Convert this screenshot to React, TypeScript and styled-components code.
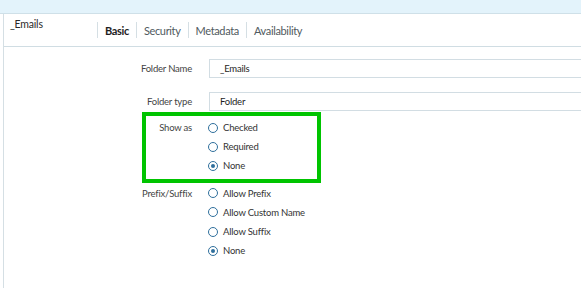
import styled, { createGlobalStyle } from "styled-components"

const GlobalStyle = createGlobalStyle`
  html, body {
    margin: 0;
    padding: 0;
    background: #ffffff;
  }
  body {
    font-family: Lato, "Open Sans", sans-serif;
    font-size: 9.5px;
    letter-spacing: -0.2px;
    color: #333333;
  }
`

const Page = styled.div`
  width: 581px;
  height: 288px;
  overflow: hidden;
  display: flex;
  flex-direction: column;
`

const TopStrip = styled.div`
  height: 13px;
  flex-shrink: 0;
  background-color: #e3f3fb;
  border-bottom: 1px solid #cfe0e8;
`

const Panel = styled.div`
  flex: 1;
  margin-left: 3px;
  border-left: 1px solid #d5dfe4;
  display: flex;
  flex-direction: column;
`

const Header = styled.div`
  height: 32px;
  flex-shrink: 0;
  display: flex;
  align-items: flex-start;
  border-bottom: 1px solid #d0dde3;
`

const ItemName = styled.div`
  width: 87px;
  padding-left: 6px;
  padding-top: 4px;
  font-size: 10.5px;
  color: #2a2a2a;
`

const Tabs = styled.div`
  display: flex;
  align-items: center;
  margin-top: 8px;
`

const Tab = styled.div<{ $active?: boolean }>`
  padding: 0 7px;
  height: 16px;
  display: flex;
  align-items: center;
  border-left: 1px solid #d5dfe4;
  font-size: 11px;
  letter-spacing: -0.35px;
  font-weight: ${props => props.$active ? 700 : 400};
  color: ${props => props.$active ? "#1e1e1e" : "#505a60"};
`

const Form = styled.div`
  display: flex;
  flex-direction: column;
  padding-top: 12px;
`

const FieldRow = styled.div<{ $top?: number }>`
  position: relative;
  display: grid;
  grid-template-columns: 188px 1fr;
  column-gap: 17px;
  margin-top: ${props => props.$top ?? 0}px;
`

const Label = styled.div<{ $height: number }>`
  height: ${props => props.$height}px;
  display: flex;
  align-items: center;
  justify-content: flex-end;
  color: #444444;
`

const TextBox = styled.div`
  height: 17px;
  border: 1px solid #d2dde3;
  border-right: none;
  padding-left: 10px;
  display: flex;
  align-items: center;
  color: #1e1e1e;
`

const RadioList = styled.div<{ $step: number }>`
  display: flex;
  flex-direction: column;

  & > * {
    height: ${props => props.$step}px;
  }
`

const RadioItem = styled.div`
  display: flex;
  align-items: center;
  gap: 5px;
  margin-left: -1px;
  color: #333333;
`

const RadioCircle = styled.span<{ $checked?: boolean }>`
  width: 8px;
  height: 8px;
  border: 1px solid #2f6f9c;
  border-radius: 50%;
  display: flex;
  align-items: center;
  justify-content: center;
  background: #ffffff;

  &::after {
    content: "";
    width: 4px;
    height: 4px;
    border-radius: 50%;
    background: #2f6f9c;
    display: ${props => props.$checked ? "block" : "none"};
  }
`

const Highlight = styled.div`
  position: absolute;
  left: 138px;
  top: -6px;
  width: 171px;
  height: 63px;
  border: 4px solid #00c400;
  pointer-events: none;
`

type RadioGroupProps = { options: string[]; selected: string; step?: number }

const RadioGroup = ({ options, selected, step = 19 }: RadioGroupProps) => (
  <RadioList $step={step}>
    {options.map(option => (
      <RadioItem key={option}>
        <RadioCircle $checked={option === selected} />
        {option}
      </RadioItem>
    ))}
  </RadioList>
)

export default function App() {
  return (
    <Page>
      <GlobalStyle />
      <TopStrip />
      <Panel>
        <Header>
          <ItemName>_Emails</ItemName>
          <Tabs>
            <Tab $active>Basic</Tab>
            <Tab>Security</Tab>
            <Tab>Metadata</Tab>
            <Tab>Availability</Tab>
          </Tabs>
        </Header>

        <Form>
          <FieldRow>
            <Label $height={19}>Folder Name</Label>
            <TextBox>_Emails</TextBox>
          </FieldRow>

          <FieldRow $top={14}>
            <Label $height={19}>Folder type</Label>
            <TextBox>Folder</TextBox>
          </FieldRow>

          <FieldRow $top={7}>
            <Label $height={19}>Show as</Label>
            <RadioGroup options={["Checked", "Required", "None"]} selected="None" step={19.2} />
            <Highlight />
          </FieldRow>

          <FieldRow $top={8}>
            <Label $height={19}>Prefix/Suffix</Label>
            <RadioGroup
              options={["Allow Prefix", "Allow Custom Name", "Allow Suffix", "None"]}
              selected="None"
              step={19.2}
            />
          </FieldRow>
        </Form>
      </Panel>
    </Page>
  )
}
